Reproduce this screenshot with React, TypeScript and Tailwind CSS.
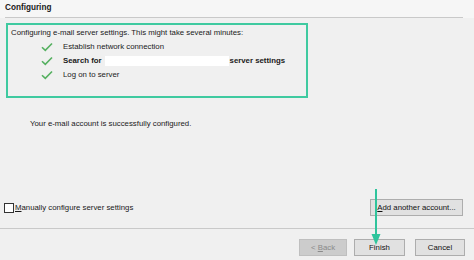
import React from "react";

const font = { fontFamily: '"Liberation Sans", Arial, sans-serif' };

function Check() {
  return (
    <svg width="12" height="10" viewBox="0 0 12 10" className="shrink-0">
      <path d="M1 5.2 L4.3 8.4 L11 1.5" fill="none" stroke="#55b060" strokeWidth="1.6" />
    </svg>
  );
}

function Btn({ children, disabled, className = "" }: { children: React.ReactNode; disabled?: boolean; className?: string }) {
  return (
    <div
      className={
        "h-[17px] flex items-center justify-center border text-[7.8px] " +
        (disabled ? "bg-[#cccccc] border-[#bfbfbf] text-[#8a8a8a] " : "bg-[#e1e1e1] border-[#adadad] text-[#111] ") +
        className
      }
    >
      {children}
    </div>
  );
}

export default function App() {
  return (
    <div style={font} className="relative w-[474px] h-[260px] bg-[#f0f0f0] flex flex-col text-[#1a1a1a] overflow-hidden">
      {/* header */}
      <div className="bg-[#f6f6f6]">
        <div className="h-[17px] pl-[5px] flex items-center text-[8.2px] font-bold">Configuring</div>
        <div className="ml-[5px] mr-[11px] h-px bg-[#c9c9c9]" />
      </div>

      {/* progress box */}
      <div className="mt-[5px] ml-[6px] w-[302px] h-[75px] border-2 border-[#3fcaa0] pl-[3px] pt-px text-[7.8px] leading-[14px]">
        <div>Configuring e-mail server settings. This might take several minutes:</div>
        <div className="flex items-center ml-[30px] gap-[10px]">
          <Check />
          <span>Establish network connection</span>
        </div>
        <div className="flex items-center ml-[30px]">
          <Check />
          <span className="ml-[10px] font-bold">Search for</span>
          <span className="ml-[3px] w-[124px] h-[10px] bg-white" />
          <span className="ml-px font-bold">server settings</span>
        </div>
        <div className="flex items-center ml-[30px] gap-[10px]">
          <Check />
          <span>Log on to server</span>
        </div>
      </div>

      <div className="mt-[19px] ml-[30px] text-[7.8px] leading-[14px]">Your e-mail account is successfully configured.</div>

      {/* options row */}
      <div className="mt-[68px] h-[17px] flex items-center justify-between pl-[4px] pr-[11px]">
        <label className="flex items-center text-[7.8px]">
          <span className="w-[10px] h-[10px] border border-[#333] bg-white" />
          <span className="ml-px">
            <u>M</u>anually configure server settings
          </span>
        </label>
        <Btn className="w-[93px]">
          <span>
            <u>A</u>dd another account...
          </span>
        </Btn>
      </div>

      <div className="mt-[12px] h-px bg-[#c9c9c9]" />

      {/* footer buttons */}
      <div className="mt-[10px] flex justify-end pr-[9px]">
        <Btn disabled className="w-[48px]">
          <span>
            &lt; <u>B</u>ack
          </span>
        </Btn>
        <Btn className="w-[51px] ml-[7px]">Finish</Btn>
        <Btn className="w-[50px] ml-[10px]">Cancel</Btn>
      </div>

      {/* annotation arrow */}
      <svg className="absolute left-[370px] top-[189px]" width="12" height="58" viewBox="0 0 12 58">
        <line x1="6" y1="0" x2="6" y2="48" stroke="#2fc49c" strokeWidth="2" />
        <path d="M1.5 45 L10.5 45 L6 56 Z" fill="#2fc49c" />
      </svg>
    </div>
  );
}
